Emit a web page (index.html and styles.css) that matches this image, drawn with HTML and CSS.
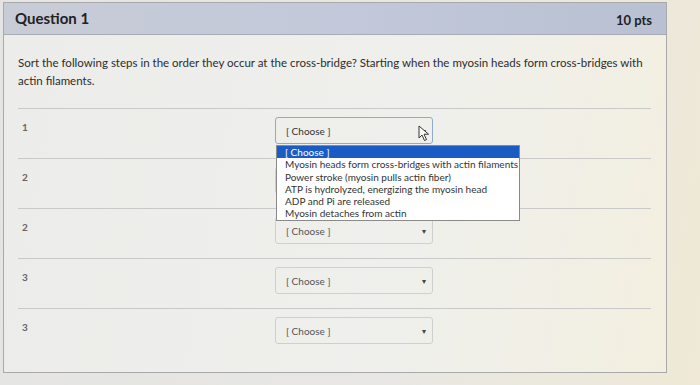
FILE: index.html
```html
<!DOCTYPE html>
<html lang="en">
<head>
  <meta charset="UTF-8" />
  <title>Question 1</title>
  <link rel="stylesheet" href="styles.css">
</head>
<body>
  <div class="quiz">
    <div class="quiz-header">
      <span class="title">Question 1</span>
      <span class="pts">10 pts</span>
    </div>
    <div class="quiz-body">
      <p class="prompt">Sort the following steps in the order they occur at the cross-bridge? Starting when the myosin heads form cross-bridges with actin filaments.</p>

      <div class="answers">
        <div class="answer-row">
          <span class="num">1</span>
          <div class="select focused">
            <span>[ Choose ]</span>
            <span class="arrow">&#9662;</span>
            <svg class="cursor" width="12" height="17" viewBox="0 0 12 17">
              <path d="M1 1 L1 13 L4 10 L6.5 15.5 L8.5 14.6 L6 9.2 L10.5 9.2 Z" fill="#fff" stroke="#333" stroke-width="1"/>
            </svg>
            <!-- open option list -->
            <ul class="options">
              <li class="active">[ Choose ]</li>
              <li>Myosin heads form cross-bridges with actin filaments</li>
              <li>Power stroke (myosin pulls actin fiber)</li>
              <li>ATP is hydrolyzed, energizing the myosin head</li>
              <li>ADP and Pi are released</li>
              <li>Myosin detaches from actin</li>
            </ul>
          </div>
        </div>
        <div class="answer-row">
          <span class="num">2</span>
          <!-- covered by the open list above -->
          <div class="select covered"><span>[ Choose ]</span><span class="arrow">&#9662;</span></div>
        </div>
        <div class="answer-row">
          <span class="num">2</span>
          <div class="select"><span>[ Choose ]</span><span class="arrow">&#9662;</span></div>
        </div>
        <div class="answer-row">
          <span class="num">3</span>
          <div class="select"><span>[ Choose ]</span><span class="arrow">&#9662;</span></div>
        </div>
        <div class="answer-row">
          <span class="num">3</span>
          <div class="select"><span>[ Choose ]</span><span class="arrow">&#9662;</span></div>
        </div>
      </div>
    </div>
  </div>
</body>
</html>
```

FILE: styles.css
```css
* {
  box-sizing: border-box;
}
body {
  margin: 0;
  height: 385px;
  overflow: hidden;
  font-family: Lato, 'Open Sans', sans-serif;
  background: linear-gradient(100deg, #e4e4e2 0%, #e8e7e3 60%, #efe9d6 100%);
  padding: 2px 0 0 3px;
}
.quiz {
  width: 664px;
  border: 1px solid #a9a9a9;
  background: linear-gradient(100deg, #ececea 0%, #efefec 60%, #f3efe0 100%);
}
.quiz-header {
  height: 32px;
  display: flex;
  align-items: center;
  justify-content: space-between;
  padding: 0 14px 2px 11px;
  background: linear-gradient(90deg, #c8ccd6 0%, #c3c9da 50%, #b8c0d2 100%);
  border-bottom: 1px solid #a7abb5;
  color: #222;
}
.title {
  font-size: 15px;
  font-weight: bold;
}
.pts {
  font-size: 13px;
  font-weight: bold;
  padding-top: 5px;
}
.quiz-body {
  padding: 19px 15px 14px 14px;
}
.prompt {
  margin: 0 0 18px 0;
  font-size: 11.5px;
  line-height: 18px;
  color: #2c2c2c;
}
.answer-row {
  height: 50px;
  border-top: 1px solid #c9c9c9;
  padding: 8px 0 0 4px;
  display: flex;
}
.num {
  width: 253px;
  font-size: 10px;
  font-weight: bold;
  color: #666;
  padding-top: 4px;
}
.select {
  position: relative;
  width: 158px;
  height: 27px;
  border: 1px solid #cfcfcf;
  border-radius: 3px;
  display: flex;
  align-items: center;
  justify-content: space-between;
  padding: 0 6px 0 10px;
  font-size: 10px;
  color: #555;
}
.select.focused {
  border-color: #8ea9d3;
  color: #333;
}
.select.covered span {
  visibility: hidden;
}
.arrow {
  font-size: 8px;
  color: #444;
}
.cursor {
  position: absolute;
  left: 142px;
  top: 7px;
}
.options {
  position: absolute;
  top: 27px;
  left: 0;
  z-index: 5;
  width: 244px;
  margin: 0;
  padding: 0;
  list-style: none;
  background: #fff;
  border: 1px solid #8a8a8a;
  font-size: 10px;
  line-height: 12.3px;
  color: #333;
}
.options li {
  padding-left: 8px;
  white-space: nowrap;
}
.options li.active {
  background: #1b5cc4;
  color: #fff;
}
```
